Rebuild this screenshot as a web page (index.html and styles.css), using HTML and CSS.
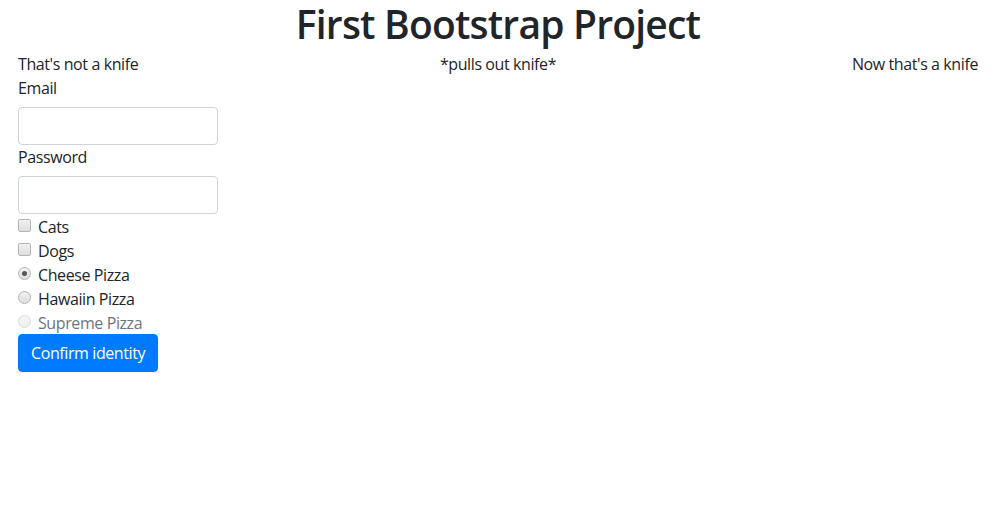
FILE: index.html
```html
<!doctype html>
<html lang="en">
<head>
	<meta charset="UTF-8">
	<title>First Bootstrap Project</title>
	<link rel="stylesheet" href="styles.css">
</head>
<body>
<div class="container">
	<h1 class="title">First Bootstrap Project</h1>
	<div class="row">
		<div class="col">That's not a knife</div>
		<div class="col center">*pulls out knife*</div>
		<div class="col right">Now that's a knife</div>
	</div>
	<form class="login">
		<label class="label" for="email">Email</label>
		<input class="field" type="email" id="email">
		<label class="label" for="password">Password</label>
		<input class="field" type="password" id="password">
		<label class="check"><input type="checkbox"> Cats</label>
		<label class="check"><input type="checkbox"> Dogs</label>
		<label class="check"><input type="radio" name="pizza" checked> Cheese Pizza</label>
		<label class="check"><input type="radio" name="pizza"> Hawaiin Pizza</label>
		<label class="check muted"><input type="radio" name="pizza" disabled> Supreme Pizza</label>
		<button class="btn" type="button">Confirm identity</button>
	</form>
</div>
</body>
</html>
```

FILE: styles.css
```css
body
{
	margin: 0;
	font-family: "Open Sans", "Noto Sans", sans-serif;
	font-size: 16px;
	line-height: 24px;
	letter-spacing: -0.4px;
	color: #212529;
	background-color: #FFFFFF;
}

.container
{
	width: 960px;
	margin-left: 18px;
}

.title
{
	margin: 0 0 4px;
	font-size: 39px;
	line-height: 48px;
	font-weight: 600;
	letter-spacing: -0.8px;
	text-align: center;
}

.row
{
	display: flex;
}

.col
{
	flex: 1;
}

.center
{
	text-align: center;
}

.right
{
	text-align: right;
}

.login
{
	display: flex;
	flex-direction: column;
	align-items: flex-start;
}

.label
{
	margin-bottom: 7px;
}

.field
{
	box-sizing: border-box;
	width: 200px;
	height: 38px;
	border: 1px solid #ced4da;
	border-radius: 4px;
	padding: 6px 12px;
	font: inherit;
}

.check
{
	box-sizing: border-box;
	display: flex;
	align-items: center;
	gap: 7px;
	height: 24px;
	padding-top: 2px;
}

.check input
{
	appearance: none;
	margin: 0;
	width: 13px;
	height: 13px;
	border: 1px solid #b4b4b4;
	border-radius: 2px;
	background: linear-gradient(#f2f2f2, #dedede);
	position: relative;
	top: -2px;
}

.check input[type="radio"]
{
	border-radius: 50%;
}

.check input[type="radio"]:checked::after
{
	content: "";
	position: absolute;
	left: 3px;
	top: 3px;
	width: 5px;
	height: 5px;
	border-radius: 50%;
	background-color: #555555;
}

.check input:disabled
{
	opacity: .5;
}

.muted
{
	color: #6c757d;
}

.btn
{
	height: 38px;
	padding: 6px 12px;
	border: 1px solid #007bff;
	border-radius: 4px;
	background-color: #007bff;
	color: #FFFFFF;
	font: inherit;
	letter-spacing: -0.4px;
}
```
